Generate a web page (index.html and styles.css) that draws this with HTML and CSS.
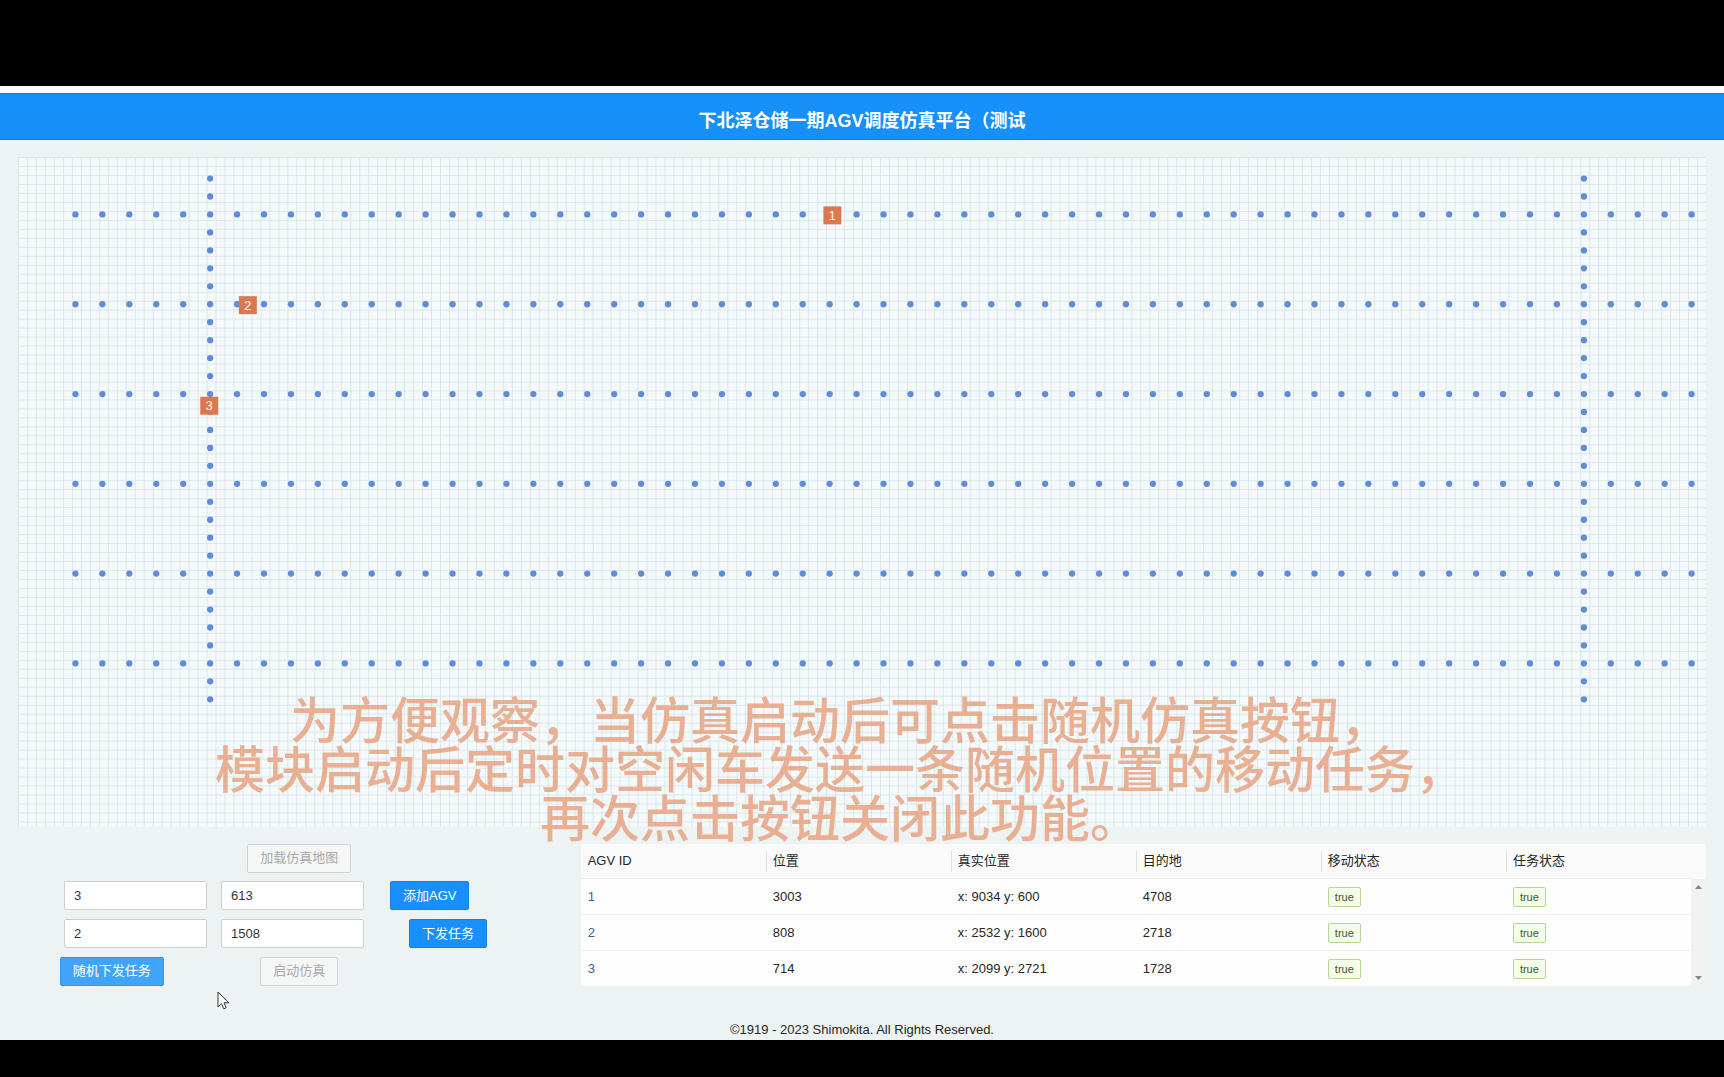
FILE: index.html
```html
<!DOCTYPE html>
<html lang="zh-CN">
<head>
  <meta charset="UTF-8">
  <title>下北泽仓储一期AGV调度仿真平台</title>
  <link rel="stylesheet" href="styles.css">
</head>
<body>
  <div class="page">
    <header class="header">
      <h1>下北泽仓储一期AGV调度仿真平台（测试</h1>
    </header>

    <main class="content">
      <svg id="map" class="map" viewBox="0 0 1880 746" role="img" aria-label="仿真地图">
        <defs>
          <pattern id="grid" width="10" height="10" patternUnits="userSpaceOnUse">
            <path class="grid-line" d="M0 .5H10M.5 0V10"/>
          </pattern>
        </defs>
        <rect class="map-bg" width="1880" height="746"/>
        <rect width="1880" height="746" fill="url(#grid)"/>
        <g id="nodes" class="nodes"></g>
        <g id="agvs" class="agvs"></g>
      </svg>

      <section class="panel">
        <form class="controls" id="controls">
          <div class="row thirds">
            <button type="button" class="btn middle" disabled>加载仿真地图</button>
          </div>
          <div class="row fields">
            <input type="text" aria-label="AGV编号" value="3">
            <input type="text" aria-label="起始位置" value="613">
            <button type="button" class="btn primary add">添加AGV</button>
          </div>
          <div class="row fields">
            <input type="text" aria-label="任务AGV编号" value="2">
            <input type="text" aria-label="目标位置" value="1508">
            <button type="button" class="btn primary send">下发任务</button>
          </div>
          <div class="row thirds">
            <button type="button" class="btn primary active">随机下发任务</button>
            <button type="button" class="btn middle" disabled>启动仿真</button>
          </div>
        </form>

        <div class="table-box">
          <table>
            <thead>
              <tr>
                <th>AGV ID</th>
                <th>位置</th>
                <th>真实位置</th>
                <th>目的地</th>
                <th>移动状态</th>
                <th>任务状态</th>
              </tr>
            </thead>
            <tbody>
              <tr>
                <td><a href="#">1</a></td>
                <td>3003</td>
                <td>x: 9034 y: 600</td>
                <td>4708</td>
                <td><span class="tag">true</span></td>
                <td><span class="tag">true</span></td>
              </tr>
              <tr>
                <td><a href="#">2</a></td>
                <td>808</td>
                <td>x: 2532 y: 1600</td>
                <td>2718</td>
                <td><span class="tag">true</span></td>
                <td><span class="tag">true</span></td>
              </tr>
              <tr>
                <td><a href="#">3</a></td>
                <td>714</td>
                <td>x: 2099 y: 2721</td>
                <td>1728</td>
                <td><span class="tag">true</span></td>
                <td><span class="tag">true</span></td>
              </tr>
            </tbody>
          </table>
          <div class="scrollbar" aria-hidden="true">
            <svg width="7" height="4" viewBox="0 0 7 4"><path d="M0 4 3.5 0 7 4z"/></svg>
            <svg width="7" height="4" viewBox="0 0 7 4"><path d="M0 0h7L3.5 4z"/></svg>
          </div>
        </div>
      </section>
    </main>

    <footer class="footer">©1919 - 2023 Shimokita. All Rights Reserved.</footer>

    <p class="caption">为方便观察，当仿真启动后可点击随机仿真按钮，<br>模块启动后定时对空闲车发送一条随机位置的移动任务，<br>再次点击按钮关闭此功能。</p>

    <svg class="cursor" width="13" height="19" viewBox="0 0 13 19" aria-hidden="true">
      <path d="M1 1v15l3.5-3.3 2.3 5.1 2.4-1-2.2-5H12z"/>
    </svg>
  </div>

  <script>
    const SVG = "http://www.w3.org/2000/svg";
    const nodes = document.getElementById("nodes");
    const agvs = document.getElementById("agvs");

    function add(parent, name, attrs, text) {
      const el = document.createElementNS(SVG, name);
      for (const key in attrs) el.setAttribute(key, attrs[key]);
      if (text) el.textContent = text;
      parent.appendChild(el);
    }

    // 横向巷道
    for (let row = 0; row < 6; row++) {
      for (let i = 0; i <= 60; i++) {
        add(nodes, "circle", { cx: 64, cy: 64, r: 3.5, transform: `translate(${i * 30} ${row * 100})` });
      }
    }

    // 纵向主干道，与巷道重合的点不重复画
    [214, 1744].forEach((cx) => {
      for (let i = 0; i < 30; i++) {
        if (i % 5 !== 2) add(nodes, "circle", { cx, cy: 24 + i * 20, r: 3.5 });
      }
    });

    const agvList = [
      { id: 1, x: 897, y: 55 },
      { id: 2, x: 246, y: 155 },
      { id: 3, x: 203, y: 267 },
    ];
    agvList.forEach((agv) => {
      add(agvs, "rect", { x: agv.x, y: agv.y, width: 20, height: 20 });
      add(agvs, "text", { x: agv.x + 10, y: agv.y + 15 }, agv.id);
    });
  </script>
</body>
</html>
```
FILE: styles.css
```css
* {
  box-sizing: border-box;
}
body {
  margin: 0;
  padding: 86px 0 37px;
  background: #000;
  font-family: "Liberation Sans", "Noto Sans CJK SC", sans-serif;
  font-size: 13px;
  line-height: 20px;
  color: #262626;
}
.page {
  position: relative;
  background: #edf3f3;
  border-top: 7px solid #fff;
}
.header {
  background: #1890fa;
  border-top: 1px solid #2574bb;
  border-bottom: 1px solid #2574bb;
  padding: 15px 0 6px;
}
h1 {
  margin: 0;
  color: #fff;
  font-size: 18px;
  line-height: 24px;
  text-align: center;
}
.content {
  padding: 17px 18px 0;
}

/* 地图 */
.map {
  display: block;
  width: 100%;
  height: auto;
}
.map-bg {
  fill: #f4fafb;
}
.grid-line {
  fill: none;
  stroke: #d7e3e7;
  stroke-width: 1;
}
.nodes {
  fill: #5f8bd8;
}
.agvs rect {
  fill: #dc7850;
}
.agvs text {
  fill: #fff;
  font-size: 14px;
  text-anchor: middle;
}

/* 操作区 */
.panel {
  display: grid;
  grid-template-columns: 1fr 2fr;
  margin-top: 17px;
}
.controls {
  display: flex;
  flex-direction: column;
  justify-content: space-between;
}
.row {
  height: 29px;
}
.thirds {
  display: grid;
  grid-template-columns: repeat(3, 1fr);
  justify-items: center;
}
.middle {
  grid-column: 2;
}
.fields {
  display: flex;
  gap: 14px;
  padding-left: 46px;
}
input {
  width: 143px;
  height: 29px;
  padding: 0 9px;
  border: 1px solid #cdd0d0;
  border-radius: 2px;
  background: #fff;
  color: #333;
  font: inherit;
}
.btn {
  height: 29px;
  padding: 0 12px;
  border: 1px solid #d0d3d3;
  border-radius: 2px;
  background: #f5f6f6;
  color: #a9a9a9;
  font: inherit;
  white-space: nowrap;
}
.primary {
  background: #1890ff;
  border-color: #1a7fdc;
  color: #fff;
  cursor: pointer;
}
.active {
  background: #40a5fa;
  border-color: #3494e6;
}
.add {
  margin-left: 12px;
}
.send {
  margin-left: 31px;
}

/* 状态表 */
.table-box {
  position: relative;
  padding-right: 15px;
  background: #fafafa;
}
table {
  width: 100%;
  table-layout: fixed;
  border-collapse: separate;
  border-spacing: 0;
}
th, td {
  padding: 1px 7px 0;
  text-align: left;
  font-weight: normal;
  border-bottom: 1px solid #ececec;
}
th {
  position: relative;
  height: 35px;
}
th:not(:first-child)::before {
  content: "";
  position: absolute;
  left: 0;
  top: 7px;
  width: 1px;
  height: 21px;
  background: #e0e0e0;
}
td {
  height: 36px;
  background: #fefefe;
}
tbody tr:last-child td {
  height: 35px;
  border-bottom: 0;
}
td a {
  color: #3f5f91;
  text-decoration: none;
}
.tag {
  display: inline-block;
  padding: 0 6px;
  border: 1px solid #b4d795;
  border-radius: 2px;
  background: #f4fee9;
  color: #3a5a28;
  font-size: 11px;
  line-height: 18px;
  vertical-align: top;
}
.scrollbar {
  position: absolute;
  top: 35px;
  right: 0;
  bottom: 0;
  width: 15px;
  padding: 6px 4px;
  background: #f1f1f1;
  display: flex;
  flex-direction: column;
  justify-content: space-between;
  fill: #858585;
}

.footer {
  margin-top: 34px;
  text-align: center;
}

/* 字幕 */
.caption {
  position: absolute;
  left: 0;
  right: 44px;
  bottom: 195px;
  margin: 0;
  color: rgba(231, 155, 118, 0.78);
  font-size: 50px;
  font-weight: 500;
  line-height: 49px;
  text-align: center;
  pointer-events: none;
}
.cursor {
  position: absolute;
  left: 217px;
  bottom: 30px;
  fill: #fff;
  stroke: #333;
}
```
